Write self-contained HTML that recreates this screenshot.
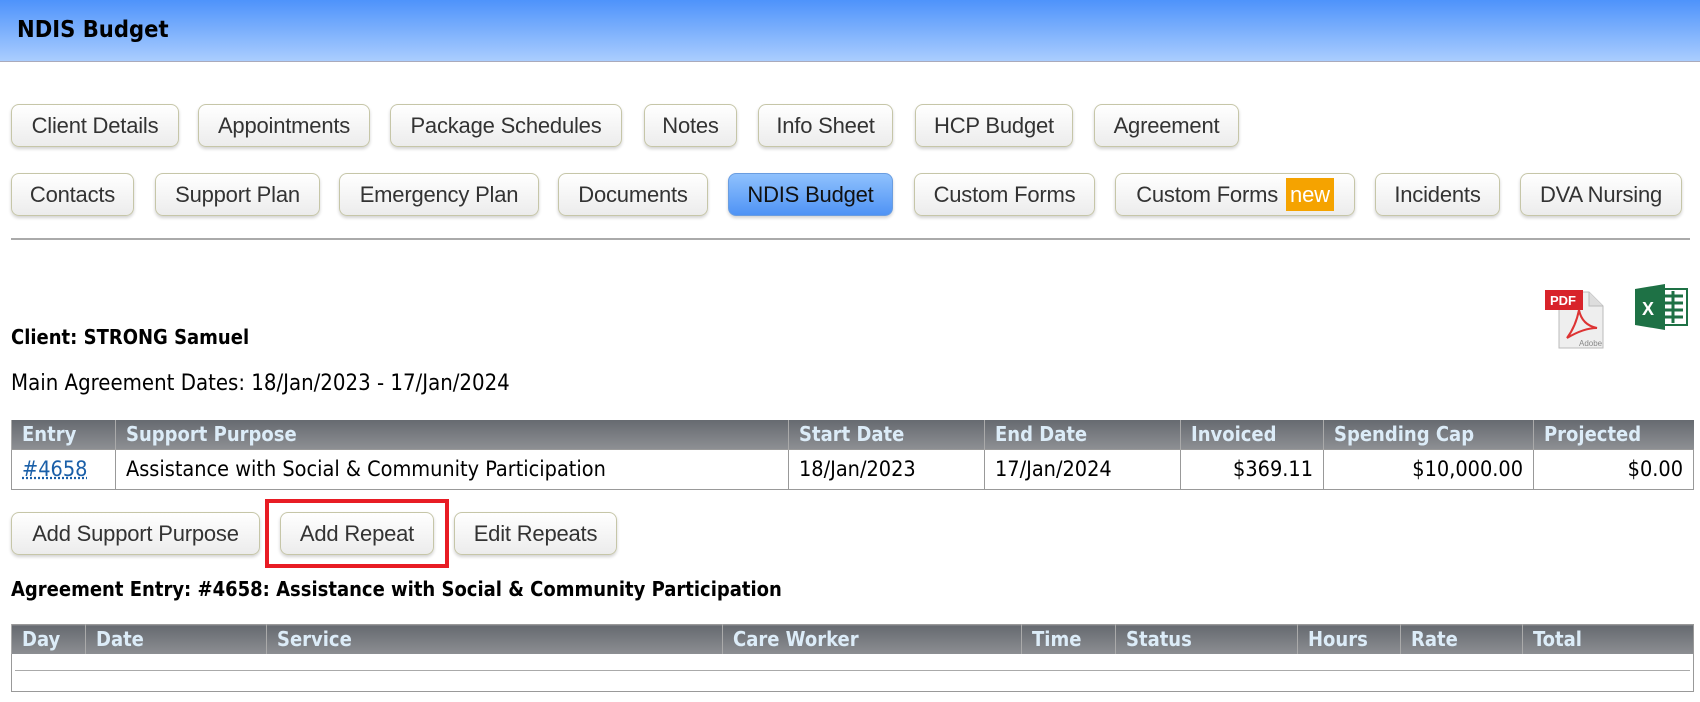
<!DOCTYPE html>
<html><head><meta charset="utf-8"><style>
*{box-sizing:border-box;margin:0;padding:0}
body{width:1700px;height:702px;background:#fff;position:relative;overflow:hidden;font-family:"DejaVu Sans Condensed","DejaVu Sans",sans-serif;color:#000}
.hdr{position:absolute;left:0;top:0;width:1700px;height:62px;background:linear-gradient(#4e93fb,#aacdfe);border-bottom:1px solid #aab;}
.hdr span{position:absolute;left:17px;top:15px;font-size:23.5px;font-weight:bold;}
.b{position:absolute;height:43px;border:1px solid #c6c6a8;border-radius:8px;background:linear-gradient(#fff,#ececec);box-shadow:0 2px 3px rgba(0,0,0,.18);font-family:"Liberation Sans",Arial,sans-serif;font-size:22px;color:#333;display:flex;align-items:center;justify-content:center;white-space:nowrap;letter-spacing:-0.2px}
.act{background:linear-gradient(#8fc1fd,#4f93f5);border-color:#6a9de0;color:#111}
.new{background:#f5a300;color:#fff;padding:0 4px;margin-left:8px;height:33px;display:inline-flex;align-items:center}
.hr{position:absolute;left:11px;top:238px;width:1679px;height:2px;background:#aaa}
.t{position:absolute;font-size:22px}
.bo{font-weight:bold;font-size:20px}
table{position:absolute;border-collapse:collapse;font-size:21.5px;table-layout:fixed}
th{background:linear-gradient(#666a70,#8d8f93);color:#dcecf8;text-align:left;font-weight:bold;font-size:20px;padding:0 10px;height:29px;border-left:1px solid #aaa;white-space:nowrap}
td{border:1px solid #999;padding:0 10px;height:40px;white-space:nowrap}
</style></head><body>
<div class="hdr"><span>NDIS Budget</span></div>
<div class="b" style="left:11px;top:104px;width:168px">Client Details</div>
<div class="b" style="left:198px;top:104px;width:172px">Appointments</div>
<div class="b" style="left:390px;top:104px;width:232px">Package Schedules</div>
<div class="b" style="left:644px;top:104px;width:93px">Notes</div>
<div class="b" style="left:758px;top:104px;width:135px">Info Sheet</div>
<div class="b" style="left:915px;top:104px;width:158px">HCP Budget</div>
<div class="b" style="left:1094px;top:104px;width:145px">Agreement</div>
<div class="b" style="left:11px;top:173px;width:123px">Contacts</div>
<div class="b" style="left:155px;top:173px;width:165px">Support Plan</div>
<div class="b" style="left:339px;top:173px;width:200px">Emergency Plan</div>
<div class="b" style="left:558px;top:173px;width:150px">Documents</div>
<div class="b act" style="left:728px;top:173px;width:165px">NDIS Budget</div>
<div class="b" style="left:914px;top:173px;width:181px">Custom Forms</div>
<div class="b" style="left:1115px;top:173px;width:240px">Custom Forms<span class="new">new</span></div>
<div class="b" style="left:1375px;top:173px;width:125px">Incidents</div>
<div class="b" style="left:1520px;top:173px;width:162px">DVA Nursing</div>
<div class="hr"></div>
<svg style="position:absolute;left:1545px;top:286px" width="64" height="66" viewBox="0 0 64 66">
<path d="M14 6h30l14 14v42H14z" fill="#eee" stroke="#bbb"/><path d="M44 6v14h14" fill="#ddd" stroke="#bbb"/>
<rect x="0" y="4" width="38" height="20" fill="#d8232a"/><text x="5" y="19" font-size="13" fill="#fff" font-family="Liberation Sans" font-weight="bold">PDF</text>
<path d="M22 52c6-8 10-18 12-28 2 10 8 16 18 18-10 0-20 4-30 10z" fill="none" stroke="#d33" stroke-width="2"/>
<text x="34" y="60" font-size="8" fill="#888" font-family="Liberation Sans">Adobe</text></svg>
<svg style="position:absolute;left:1635px;top:284px" width="54" height="46" viewBox="0 0 54 46">
<rect x="22" y="5" width="30" height="36" fill="#fff" stroke="#1e7145" stroke-width="2"/>
<path d="M30 12h18M30 19h18M30 26h18M30 33h18M38 7v32" stroke="#1e7145" stroke-width="3"/>
<path d="M0 5l30-5v46L0 41z" fill="#1e7145"/><text x="7" y="31" font-size="18" fill="#fff" font-family="Liberation Sans" font-weight="bold">X</text></svg>
<div class="t bo" style="left:11px;top:325px">Client: STRONG Samuel</div>
<div class="t" style="left:11px;top:371px">Main Agreement Dates: 18/Jan/2023 - 17/Jan/2024</div>
<table style="left:11px;top:420px;width:1683px">
<tr><th style="width:104px">Entry</th><th style="width:673px">Support Purpose</th><th style="width:196px">Start Date</th><th style="width:196px">End Date</th><th style="width:143px">Invoiced</th><th style="width:210px">Spending Cap</th><th>Projected</th></tr>
<tr><td><span style="color:#1a5fa8;text-decoration:underline dotted">#4658</span></td><td>Assistance with Social &amp; Community Participation</td><td>18/Jan/2023</td><td>17/Jan/2024</td><td style="text-align:right">$369.11</td><td style="text-align:right">$10,000.00</td><td style="text-align:right">$0.00</td></tr>
</table>
<div class="b" style="left:11px;top:512px;width:249px">Add Support Purpose</div>
<div class="b" style="left:280px;top:512px;width:154px">Add Repeat</div>
<div class="b" style="left:454px;top:512px;width:163px">Edit Repeats</div>
<div style="position:absolute;left:265px;top:499px;width:184px;height:69px;border:4px solid #e81c24"></div>
<div class="t bo" style="left:11px;top:577px">Agreement Entry: #4658: Assistance with Social &amp; Community Participation</div>
<table style="left:11px;top:624px;width:1683px;border:1px solid #999">
<tr><th style="width:74px">Day</th><th style="width:181px">Date</th><th style="width:456px">Service</th><th style="width:299px">Care Worker</th><th style="width:94px">Time</th><th style="width:182px">Status</th><th style="width:103px">Hours</th><th style="width:122px">Rate</th><th>Total</th></tr>
<tr><td colspan="9" style="height:38px;border:none;padding:0 3px 0 3px"><div style="border-top:1px solid #aaa;margin-top:-2px"></div></td></tr>
</table>
</body></html>
